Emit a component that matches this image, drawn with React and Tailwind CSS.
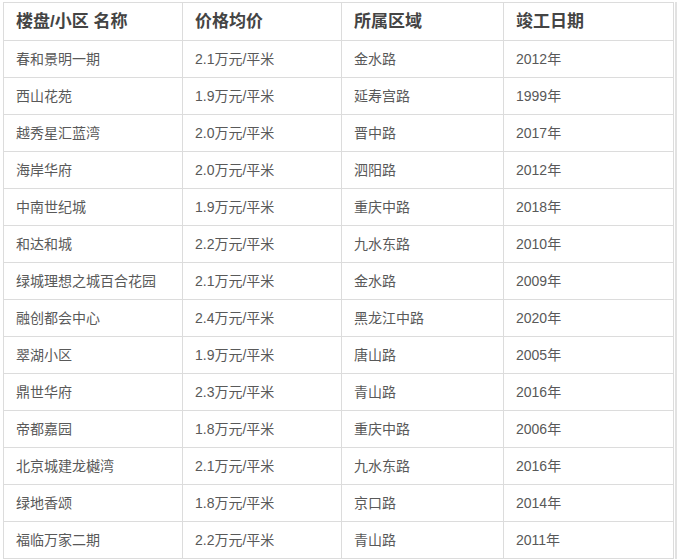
const ROWS = [
  ['春和景明一期', '2.1万元/平米', '金水路', '2012年'],
  ['西山花苑', '1.9万元/平米', '延寿宫路', '1999年'],
  ['越秀星汇蓝湾', '2.0万元/平米', '晋中路', '2017年'],
  ['海岸华府', '2.0万元/平米', '泗阳路', '2012年'],
  ['中南世纪城', '1.9万元/平米', '重庆中路', '2018年'],
  ['和达和城', '2.2万元/平米', '九水东路', '2010年'],
  ['绿城理想之城百合花园', '2.1万元/平米', '金水路', '2009年'],
  ['融创都会中心', '2.4万元/平米', '黑龙江中路', '2020年'],
  ['翠湖小区', '1.9万元/平米', '唐山路', '2005年'],
  ['鼎世华府', '2.3万元/平米', '青山路', '2016年'],
  ['帝都嘉园', '1.8万元/平米', '重庆中路', '2006年'],
  ['北京城建龙樾湾', '2.1万元/平米', '九水东路', '2016年'],
  ['绿地香颂', '1.8万元/平米', '京口路', '2014年'],
  ['福临万家二期', '2.2万元/平米', '青山路', '2011年'],
];

const HEAD = ['楼盘/小区 名称', '价格均价', '所属区域', '竣工日期'];
const WIDTHS = ['w-[179px]', 'w-[159px]', 'w-[162px]', 'w-[170px]'];

export default function App() {
  return (
    <div className="bg-white w-[677px] h-[559px] overflow-hidden pt-[2px] pl-[3px] flex" style={{ fontFamily: '"Liberation Sans", "Noto Sans CJK SC", sans-serif' }}>
      <table className="border-collapse table-fixed w-[671px] shrink-0">
        <thead>
          <tr className="h-[38px]">
            {HEAD.map((h, i) => (
              <th key={h} className={`${WIDTHS[i]} border border-[#dcdcdc] text-left font-bold text-[17px] text-[#444] pl-[12px] pr-2 pt-[1px] whitespace-nowrap`}>{h}</th>
            ))}
          </tr>
        </thead>
        <tbody>
          {ROWS.map((r, ri) => (
            <tr key={ri} className="h-[37px]">
              {r.map((c, ci) => (
                <td key={ci} className="border border-[#dcdcdc] text-[14px] text-[#595959] pl-[12px] pr-2 whitespace-nowrap">{c}</td>
              ))}
            </tr>
          ))}
        </tbody>
      </table>
      <div className="w-[2px] ml-[1px] bg-[#e2e2e2] shrink-0" />
    </div>
  );
}
